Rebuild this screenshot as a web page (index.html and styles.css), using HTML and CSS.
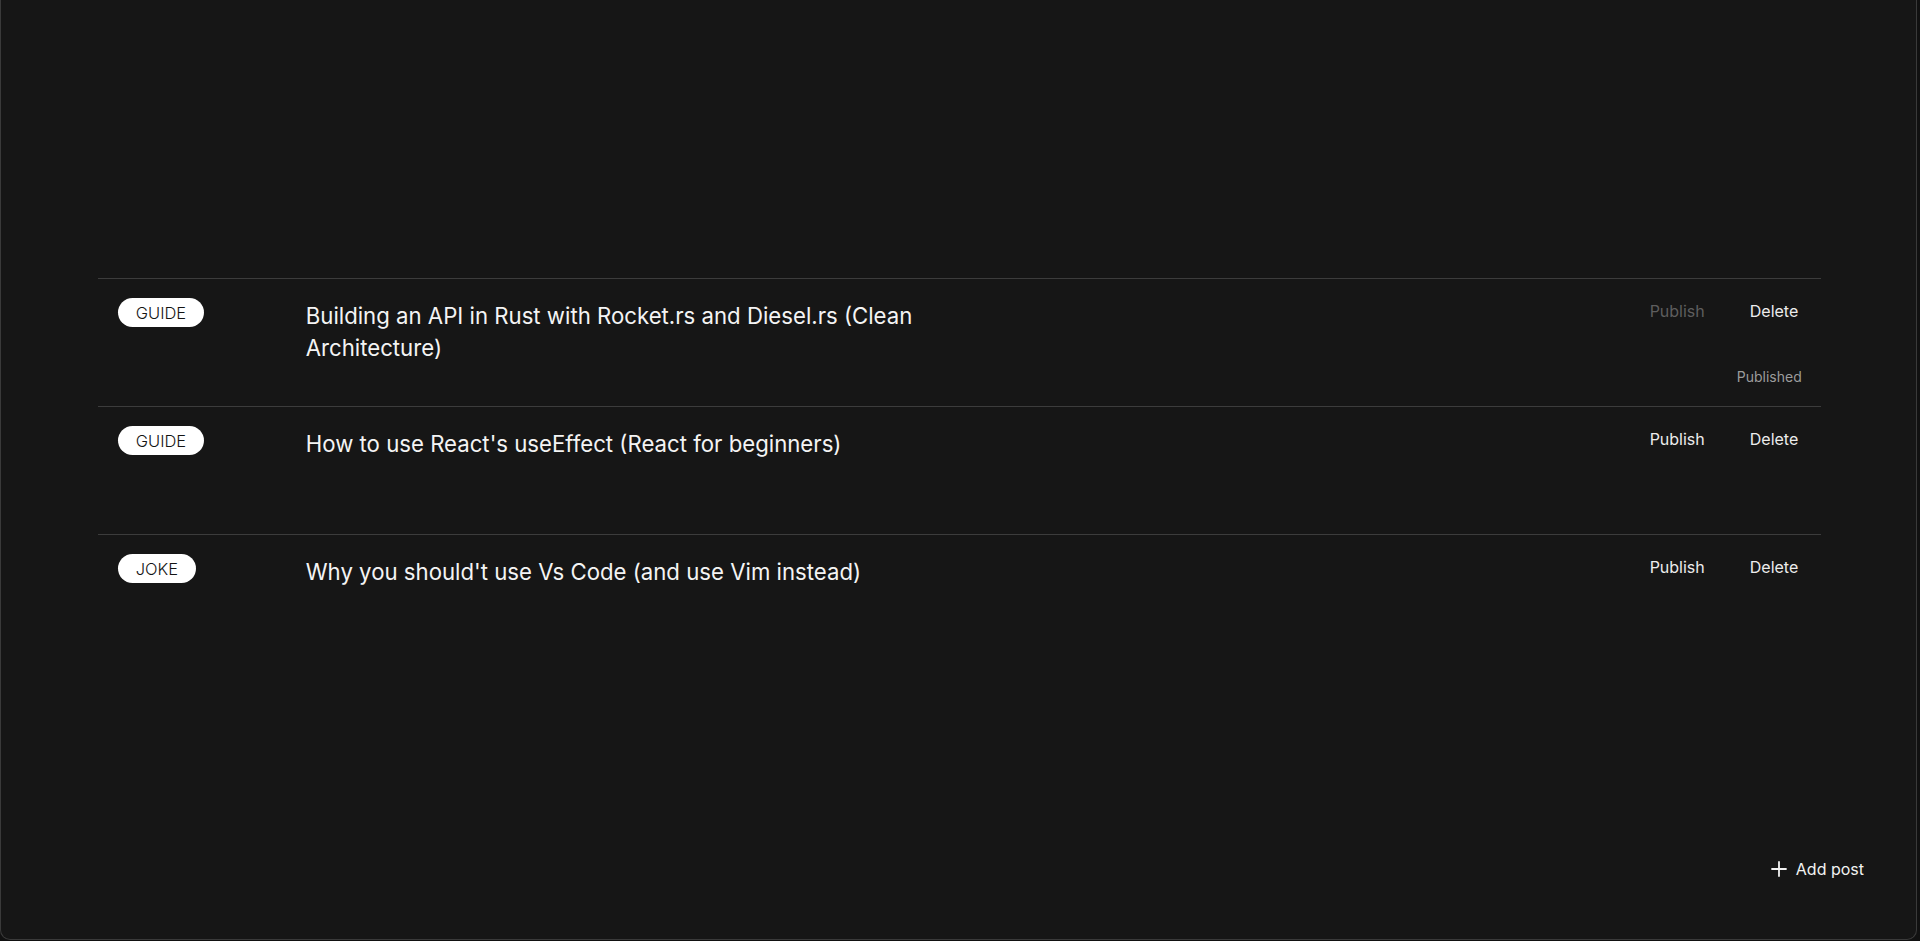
FILE: index.html
```html
<!DOCTYPE html>
<html lang="en">
<head>
<meta charset="utf-8">
<title>Posts</title>
<link rel="stylesheet" href="styles.css">
</head>
<body>
<div class="window">
  <main class="posts">
    <div class="post">
      <div class="tag-col"><span class="tag">GUIDE</span></div>
      <div class="title">Building an API in Rust with Rocket.rs and Diesel.rs (Clean Architecture)</div>
      <div class="actions">
        <div class="buttons">
          <button class="btn btn-disabled">Publish</button>
          <button class="btn">Delete</button>
        </div>
        <div class="status">Published</div>
      </div>
    </div>
    <div class="post">
      <div class="tag-col"><span class="tag">GUIDE</span></div>
      <div class="title">How to use React's useEffect (React for beginners)</div>
      <div class="actions">
        <div class="buttons">
          <button class="btn">Publish</button>
          <button class="btn">Delete</button>
        </div>
      </div>
    </div>
    <div class="post">
      <div class="tag-col"><span class="tag">JOKE</span></div>
      <div class="title">Why you should't use Vs Code (and use Vim instead)</div>
      <div class="actions">
        <div class="buttons">
          <button class="btn">Publish</button>
          <button class="btn">Delete</button>
        </div>
      </div>
    </div>
  </main>
  <footer class="footer">
    <button class="add">
      <svg class="plus" width="16" height="16" viewBox="0 0 16 16" aria-hidden="true"><path d="M8 1v14M1 8h14" stroke="#f2f2f2" stroke-width="1.8" fill="none" stroke-linecap="round"/></svg>
      <span>Add post</span>
    </button>
  </footer>
</div>
</body>
</html>
```

FILE: styles.css
```css
* { box-sizing: border-box; }
html, body {
  margin: 0;
  padding: 0;
  background: #111111;
  font-family: Inter, "Noto Sans", "Liberation Sans", sans-serif;
  color: #f0f0f0;
}
.window {
  width: calc(100% - 3px);
  height: 940px;
  background: #161616;
  border: 1px solid #3a3a3a;
  border-top: none;
  border-radius: 0 0 10px 10px;
  display: flex;
  flex-direction: column;
  padding-top: 278px;
}
.posts {
  width: 90%;
  margin: 0 auto 0 calc(5% + 1px);
}
.post {
  display: grid;
  grid-template-columns: 188px 670px 1fr auto;
  height: 128px;
  border-top: 1px solid #3c3c3c;
  padding: 19px 23px 21px 20px;
}
.tag-col { display: flex; align-items: flex-start; }
.tag {
  display: inline-block;
  background: #ffffff;
  color: #141414;
  font-size: 16.5px;
  font-weight: 300;
  line-height: 27px;
  height: 29px;
  padding: 2px 18px 0;
  border-radius: 15px;
}
.title {
  grid-column: 2;
  padding-top: 2px;
  font-size: 22.2px;
  line-height: 32px;
  color: #f4f4f4;
}
.actions {
  grid-column: 4;
  display: flex;
  flex-direction: column;
  align-items: flex-end;
  justify-content: space-between;
}
.buttons { display: flex; gap: 45px; padding-top: 1px; }
.btn {
  background: none;
  border: none;
  padding: 0;
  font-family: inherit;
  font-size: 16px;
  line-height: 24px;
  color: #ececec;
  cursor: pointer;
}
.btn-disabled { color: #5e5e5e; }
.status {
  margin-right: -3.5px;
  font-size: 14px;
  line-height: 16px;
  color: #9c9c9c;
}
.footer {
  margin-top: auto;
  display: flex;
  justify-content: flex-end;
  padding: 0 52px 58px 0;
}
.add {
  display: flex;
  align-items: center;
  gap: 9px;
  background: none;
  border: none;
  padding: 0;
  font-family: inherit;
  font-size: 16px;
  line-height: 24px;
  color: #f2f2f2;
  cursor: pointer;
}
.plus { display: block; }
```
